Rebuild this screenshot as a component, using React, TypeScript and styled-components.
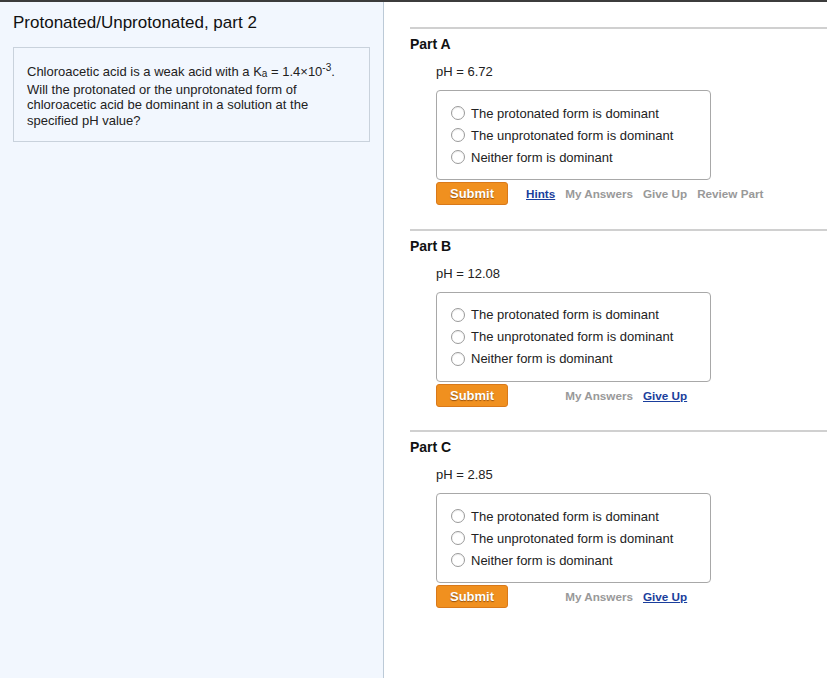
import React from "react";
import styled, { createGlobalStyle } from "styled-components";

const GlobalStyle = createGlobalStyle`
  html, body {
    margin: 0;
    padding: 0;
    background: #ffffff;
  }
  *, *::before, *::after {
    box-sizing: border-box;
  }
  body {
    font-family: "Liberation Sans", Arial, sans-serif;
    color: #222;
  }
`;

type Part = {
  label: string;
  ph: string;
  hints: boolean;
  giveUpActive: boolean;
  review: boolean;
};

const parts: Part[] = [
  { label: "Part A", ph: "6.72", hints: true, giveUpActive: false, review: true },
  { label: "Part B", ph: "12.08", hints: false, giveUpActive: true, review: false },
  { label: "Part C", ph: "2.85", hints: false, giveUpActive: true, review: false },
];

const options = [
  "The protonated form is dominant",
  "The unprotonated form is dominant",
  "Neither form is dominant",
];

export default function App() {
  return (
    <>
      <GlobalStyle />
      <Page>
        <Intro>
          <Title>Protonated/Unprotonated, part 2</Title>
          <Problem>
            Chloroacetic acid is a weak acid with a K<Sub>a</Sub> = 1.4×10<Sup>-3</Sup>.
            <br />
            Will the protonated or the unprotonated form of chloroacetic acid be dominant in a
            solution at the specified pH value?
          </Problem>
        </Intro>

        <Parts>
          {parts.map((p) => (
            <PartBlock key={p.label}>
              <PartTitle>{p.label}</PartTitle>
              <PartBody>
                <Prompt>pH = {p.ph}</Prompt>
                <Choices>
                  {options.map((o) => (
                    <Choice key={o}>
                      <Radio />
                      {o}
                    </Choice>
                  ))}
                </Choices>
                <Actions>
                  <SubmitButton>Submit</SubmitButton>
                  <Links>
                    <LinkText $active $hidden={!p.hints}>Hints</LinkText>
                    <LinkText>My Answers</LinkText>
                    <LinkText $active={p.giveUpActive}>Give Up</LinkText>
                    {p.review && <LinkText>Review Part</LinkText>}
                  </Links>
                </Actions>
              </PartBody>
            </PartBlock>
          ))}
        </Parts>
      </Page>
    </>
  );
}

const Page = styled.div`
  display: flex;
  height: 100vh;
  border-top: 2px solid #3c3c3c;
  overflow: hidden;
`;

const Intro = styled.div`
  width: 384px;
  flex-shrink: 0;
  background: #f2f7fe;
  border-right: 1px solid #bccad7;
  padding: 0 13px;
`;

const Title = styled.h1`
  margin: 11px 0 0;
  font-size: 17px;
  font-weight: normal;
  line-height: 20px;
  color: #111;
`;

const Problem = styled.div`
  margin-top: 14px;
  width: 357px;
  border: 1px solid #c9d2dc;
  padding: 16px 13px 13px;
  font-size: 13px;
  line-height: 15.5px;
  color: #222;
`;

const Sub = styled.span`
  font-size: 10px;
  vertical-align: -1px;
`;

const Sup = styled.sup`
  font-size: 10px;
  line-height: 0;
`;

const Parts = styled.div`
  flex: 1;
  padding: 25px 0 0 26px;
  display: flex;
  flex-direction: column;
`;

const PartBlock = styled.div`
  flex-shrink: 0;
  border-top: 2px solid #d0d0d0;
  padding-top: 7px;
  height: 201.5px;
`;

const PartTitle = styled.h2`
  margin: 0;
  font-size: 14px;
  font-weight: bold;
  line-height: 17px;
  color: #111;
`;

const PartBody = styled.div`
  padding-left: 26px;
`;

const Prompt = styled.div`
  margin-top: 11px;
  font-size: 13px;
  line-height: 16px;
`;

const Choices = styled.div`
  margin-top: 10px;
  width: 275px;
  border: 1px solid #a8a8a8;
  border-radius: 4px;
  padding: 11px 0 11px 14px;
  display: flex;
  flex-direction: column;
`;

const Choice = styled.label`
  display: flex;
  align-items: center;
  gap: 6px;
  height: 22px;
  font-size: 13px;
  color: #222;
`;

const Radio = styled.span`
  width: 14px;
  height: 14px;
  border: 1px solid #9a9a9a;
  border-radius: 50%;
  background: #fff;
  box-shadow: inset 0 1px 1px rgba(0, 0, 0, 0.08);
`;

const Actions = styled.div`
  margin-top: 2px;
  display: flex;
  align-items: center;
`;

const SubmitButton = styled.button`
  width: 72px;
  height: 23px;
  padding: 0;
  border: 1px solid #d9791a;
  border-radius: 3px;
  background: #f0901f;
  color: #fff;
  font-family: "Liberation Sans", Arial, sans-serif;
  font-size: 13px;
  font-weight: bold;
  text-shadow: 0 1px 1px rgba(90, 40, 0, 0.6);
`;

const Links = styled.div`
  margin-left: 18px;
  display: flex;
  gap: 10px;
`;

const LinkText = styled.span<{ $active?: boolean; $hidden?: boolean }>`
  font-size: 11.7px;
  font-weight: bold;
  color: ${({ $active }) => ($active ? "#1a3e9c" : "#999")};
  text-decoration: ${({ $active }) => ($active ? "underline" : "none")};
  visibility: ${({ $hidden }) => ($hidden ? "hidden" : "visible")};
`;
